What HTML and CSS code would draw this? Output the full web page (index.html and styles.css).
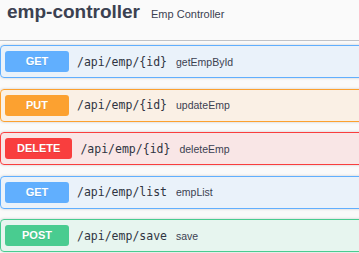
FILE: index.html
```html
<!DOCTYPE html>
<html lang="en">

<head>
    <meta charset="UTF-8">
    <meta name="viewport" content="width=device-width, initial-scale=1.0">
    <title>emp-controller</title>
    <link rel="stylesheet" href="styles.css">
</head>

<body>

    <div class="tag-section">
        <h3 class="tag-title">
            <span class="tag-name">emp-controller</span>
            <small class="tag-desc">Emp Controller</small>
        </h3>

        <div class="opblock opblock-get">
            <span class="method">GET</span>
            <span class="path">/api/emp/{id}</span>
            <span class="summary">getEmpById</span>
        </div>

        <div class="opblock opblock-put">
            <span class="method">PUT</span>
            <span class="path">/api/emp/{id}</span>
            <span class="summary">updateEmp</span>
        </div>

        <div class="opblock opblock-delete">
            <span class="method">DELETE</span>
            <span class="path">/api/emp/{id}</span>
            <span class="summary">deleteEmp</span>
        </div>

        <div class="opblock opblock-get">
            <span class="method">GET</span>
            <span class="path">/api/emp/list</span>
            <span class="summary">empList</span>
        </div>

        <div class="opblock opblock-post">
            <span class="method">POST</span>
            <span class="path">/api/emp/save</span>
            <span class="summary">save</span>
        </div>
    </div>

</body>

</html>
```

FILE: styles.css
```css
html,
body {
    overflow: hidden;
}

body {
    margin: 0;
    padding: 0;
    background-color: #fafafa;
    font-family: "Liberation Sans", Arial, sans-serif;
    color: #3b4151;
}

.tag-section {
    margin-right: -12px;
}

.tag-title {
    display: flex;
    align-items: baseline;
    gap: 11px;
    margin: 0 0 4px;
    padding: 0 0 14px 7px;
    line-height: 24px;
    border-bottom: 1px solid rgba(59, 65, 81, 0.3);
}

.tag-name {
    font-size: 19px;
    font-weight: bold;
}

.tag-desc {
    font-size: 11px;
    font-weight: normal;
}

.opblock {
    display: flex;
    align-items: center;
    margin-bottom: 10.5px;
    padding: 5px 4px;
    border: 1px solid #000;
    border-radius: 4px;
    box-shadow: 0 0 3px rgba(0, 0, 0, 0.19);
}

.method {
    box-sizing: border-box;
    min-width: 64px;
    padding: 0 12px;
    height: 21px;
    line-height: 21px;
    border-radius: 3px;
    color: #fff;
    font-size: 11px;
    font-weight: bold;
    text-align: center;
    text-shadow: 0 1px 0 rgba(0, 0, 0, 0.1);
}

.path {
    margin-left: 8px;
    font-family: "DejaVu Sans Mono", monospace;
    font-size: 11.5px;
    color: #2f3441;
}

.summary {
    margin-left: 9px;
    font-size: 10.5px;
}

.opblock-get {
    background-color: rgba(97, 175, 254, 0.1);
    border-color: #61affe;
}

.opblock-get .method {
    background-color: #61affe;
}

.opblock-put {
    background-color: rgba(252, 161, 48, 0.1);
    border-color: #fca130;
}

.opblock-put .method {
    background-color: #fca130;
}

.opblock-delete {
    background-color: rgba(249, 62, 62, 0.1);
    border-color: #f93e3e;
}

.opblock-delete .method {
    background-color: #f93e3e;
}

.opblock-post {
    background-color: rgba(73, 204, 144, 0.1);
    border-color: #49cc90;
}

.opblock-post .method {
    background-color: #49cc90;
}
```
